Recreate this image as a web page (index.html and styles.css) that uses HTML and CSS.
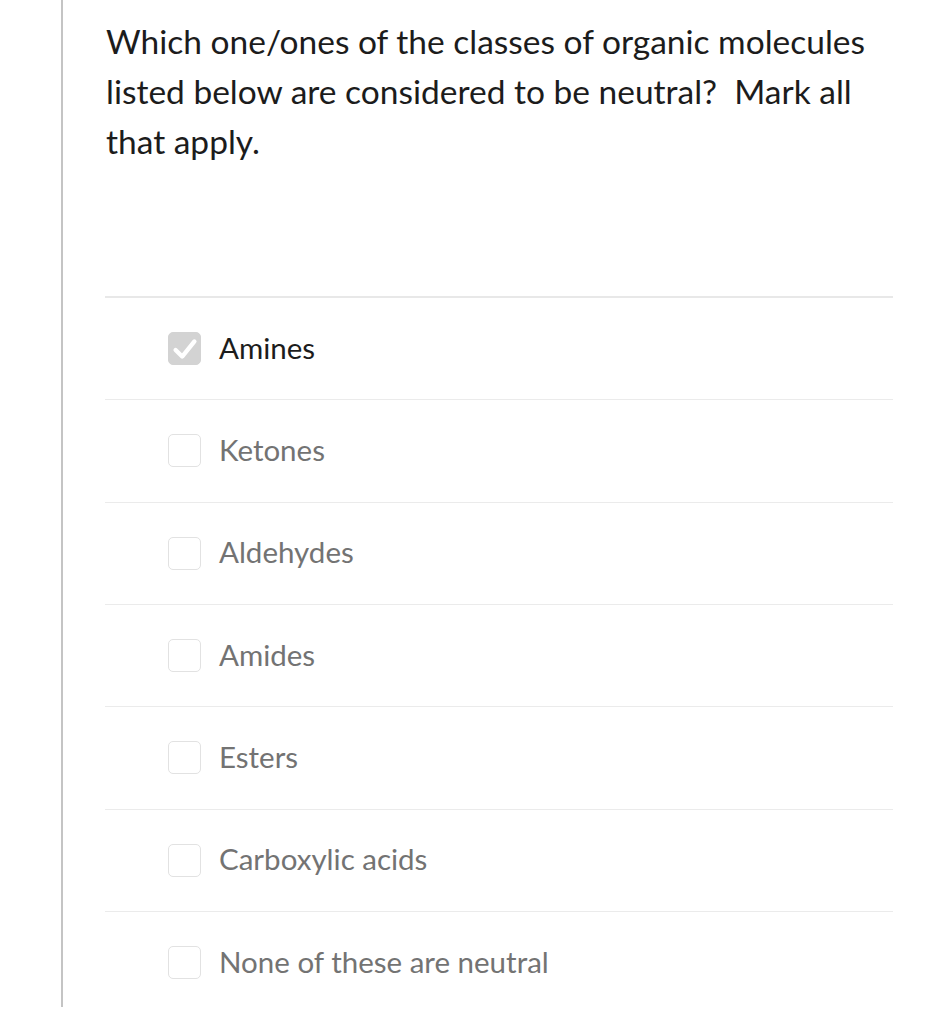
FILE: index.html
```html
<!DOCTYPE html>
<html lang="en">
<head>
<meta charset="utf-8">
<link rel="stylesheet" href="styles.css">
<title>Quiz question</title>
</head>
<body>
<div class="page">
  <div class="rail"></div>
  <main class="question">
    <p class="prompt">Which one/ones of the classes of organic molecules listed below are considered to be neutral?&nbsp; Mark all that apply.</p>
    <ul class="answers">
      <li class="answer checked"><span class="box"><svg viewBox="0 0 34 34" width="34" height="34"><path d="M7 18 L14 25 L27 9" fill="none" stroke="#fff" stroke-width="4.6" stroke-linecap="round" stroke-linejoin="round"/></svg></span><span class="label">Amines</span></li>
      <li class="answer"><span class="box"></span><span class="label">Ketones</span></li>
      <li class="answer"><span class="box"></span><span class="label">Aldehydes</span></li>
      <li class="answer"><span class="box"></span><span class="label">Amides</span></li>
      <li class="answer"><span class="box"></span><span class="label">Esters</span></li>
      <li class="answer"><span class="box"></span><span class="label">Carboxylic acids</span></li>
      <li class="answer"><span class="box"></span><span class="label">None of these are neutral</span></li>
    </ul>
  </main>
</div>
</body>
</html>
```
FILE: styles.css
```css
html, body {
  margin: 0;
  padding: 0;
  background: #fff;
}
body {
  font-family: Lato, "Open Sans", sans-serif;
  color: #1c1c1c;
}
.page {
  display: flex;
  align-items: flex-start;
  padding-left: 61px;
}
.rail {
  width: 2px;
  height: 1007px;
  background: #c4c4c4;
  flex: none;
}
.question {
  margin-left: 42px;
  width: 788px;
  padding-top: 16px;
}
.prompt {
  margin: 0 0 0 1px;
  font-size: 33.5px;
  line-height: 50px;
  width: 785px;
}
.answers {
  list-style: none;
  margin: 130px 0 0 0;
  padding: 0;
  border-top: 2px solid #e8e8e8;
}
.answer {
  display: flex;
  align-items: center;
  height: 101.33px;
  padding-left: 63px;
  border-bottom: 1px solid #ebebeb;
  font-size: 29.5px;
  color: #737373;
}
.answer:last-child {
  border-bottom: none;
}
.box {
  width: 31px;
  height: 31px;
  border: 1.5px solid #e2e2e2;
  border-radius: 5px;
  flex: none;
  display: flex;
  align-items: center;
  justify-content: center;
}
.box svg {
  width: 32px;
  height: 32px;
  flex: none;
}
.checked .box {
  background: #d3d3d3;
  border-color: #d3d3d3;
}
.checked .label {
  color: #1c1c1c;
}
.label {
  margin-left: 18px;
  padding-bottom: 3px;
}
```
